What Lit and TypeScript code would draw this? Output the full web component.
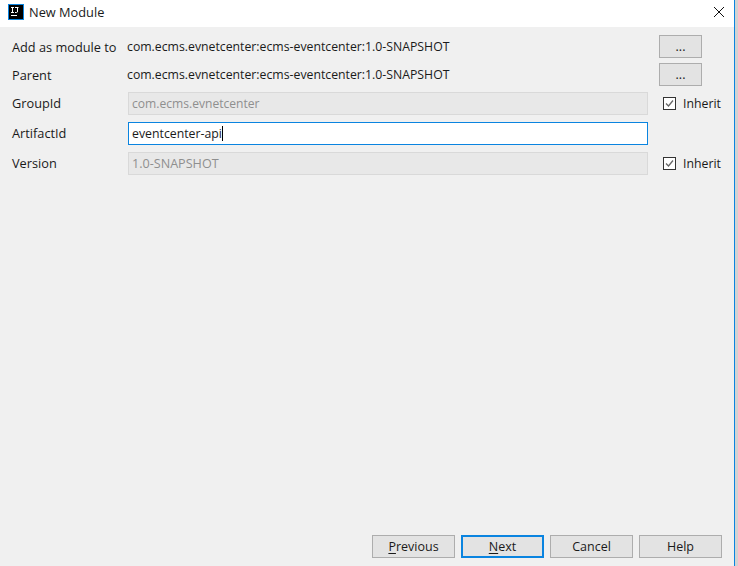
import { LitElement, html, css } from "lit";
import { customElement } from "lit/decorators.js";

@customElement("app-root")
export class AppRoot extends LitElement {
  static styles = css`
    :host {
      display: block;
      width: 738px;
      height: 566px;
      background: #d2d2d2;
      font-family: "Open Sans", "Noto Sans", sans-serif;
      font-size: 12.5px;
      color: #1a1a1a;
      overflow: hidden;
    }
    .window {
      width: 735px;
      height: 566px;
      box-sizing: border-box;
      border-right: 1px solid #0a84e0;
      display: flex;
      flex-direction: column;
      background: #f0f0f0;
    }
    .title {
      height: 27px;
      box-sizing: border-box;
      flex: none;
      background: #fff;
      display: flex;
      align-items: center;
      padding: 0 10px 3px 8px;
      gap: 5px;
      font-size: 12.8px;
    }
    .title .grow { flex: 1; }
    .content {
      flex: 1;
      display: flex;
      flex-direction: column;
      padding: 8px 32px 0 12px;
    }
    .row {
      display: grid;
      grid-template-columns: 116px 520px 11px 43px;
      height: 23px;
      align-items: center;
    }
    .row.r2 { margin-top: 5px; }
    .row.r3 { margin-top: 6px; }
    .row.r4, .row.r5 { margin-top: 7px; }
    .label { font-size: 12.75px; }
    .row.r3 .label, .row.r4 .label, .row.r5 .label { margin-bottom: 2px; }
    .field {
      box-sizing: border-box;
      height: 23px;
      grid-column: 2;
      border: 1px solid #d9d9d9;
      background: #e8e8e8;
      color: #8f8f8f;
      padding: 0 3px;
      line-height: 21px;
      white-space: nowrap;
      font-size: 12.1px;
    }
    .field.version { font-size: 12.6px; }
    .field.active {
      border-color: #0a84e0;
      background: #fff;
      color: #1a1a1a;
      font-size: 12.3px;
    }
    .caret {
      display: inline-block;
      width: 1px;
      height: 15px;
      background: #000;
      vertical-align: -3px;
    }
    .value {
      grid-column: 2;
      white-space: nowrap;
      margin-left: -1px;
      font-size: 12.27px;
    }
    .btn {
      box-sizing: border-box;
      border: 1px solid #adadad;
      background: #e3e3e3;
      color: #1a1a1a;
      height: 23px;
      display: flex;
      align-items: center;
      justify-content: center;
      font: inherit;
      padding: 0 0 1px;
    }
    .dots { grid-column: 4; }
    .check {
      grid-column: 4;
      display: flex;
      align-items: center;
      gap: 7px;
      margin-left: 4px;
      white-space: nowrap;
      font-size: 12.3px;
    }
    .box {
      box-sizing: border-box;
      width: 13px;
      height: 13px;
      border: 1px solid #333;
      background: #fff;
      display: block;
      flex: none;
    }
    .footer {
      flex: none;
      display: flex;
      gap: 6px;
      padding: 0 12px 8px 372px;
    }
    .footer .btn { width: 83px; }
    .footer .btn.primary { border: 2px solid #0a84e0; }
    u { text-underline-offset: 2px; }
  `;

  private checkbox() {
    return html`<svg class="box" viewBox="0 0 11 11"><path d="M2 5.5 L4.5 8 L9 2.5" fill="none" stroke="#666" stroke-width="1.3"/></svg>`;
  }

  render() {
    return html`
      <div class="window">
        <div class="title">
          <svg width="16" height="16" viewBox="0 0 16 16">
            <rect width="16" height="16" fill="#0a84e0"/>
            <rect x="1" y="1" width="14" height="14" fill="#000"/>
            <path d="M3 3.5h3M4.5 3.5v5M3 8.5h3M7 3.5h3.5M9.5 3.5v4.5L8.5 8.5H7M3 11.5h6" fill="none" stroke="#fff" stroke-width="1"/>
          </svg>
          <span>New Module</span>
          <span class="grow"></span>
          <svg width="10" height="10" viewBox="0 0 10 10">
            <path d="M0 0L10 10M10 0L0 10" stroke="#111" stroke-width="1" fill="none"/>
          </svg>
        </div>
        <div class="content">
          <div class="row">
            <span class="label">Add as module to</span>
            <span class="value">com.ecms.evnetcenter:ecms-eventcenter:1.0-SNAPSHOT</span>
            <button class="btn dots">...</button>
          </div>
          <div class="row r2">
            <span class="label">Parent</span>
            <span class="value">com.ecms.evnetcenter:ecms-eventcenter:1.0-SNAPSHOT</span>
            <button class="btn dots">...</button>
          </div>
          <div class="row r3">
            <span class="label">GroupId</span>
            <div class="field">com.ecms.evnetcenter</div>
            <label class="check">${this.checkbox()}<span>Inherit</span></label>
          </div>
          <div class="row r4">
            <span class="label">ArtifactId</span>
            <div class="field active">eventcenter-api<span class="caret"></span></div>
          </div>
          <div class="row r5">
            <span class="label">Version</span>
            <div class="field version">1.0-SNAPSHOT</div>
            <label class="check">${this.checkbox()}<span>Inherit</span></label>
          </div>
        </div>
        <div class="footer">
          <button class="btn"><span><u>P</u>revious</span></button>
          <button class="btn primary"><span><u>N</u>ext</span></button>
          <button class="btn">Cancel</button>
          <button class="btn">Help</button>
        </div>
      </div>
    `;
  }
}
